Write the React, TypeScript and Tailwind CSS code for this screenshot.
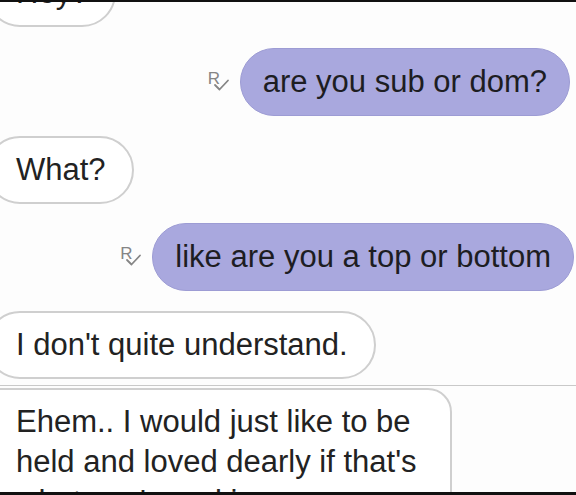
import React from 'react'

const font = { fontFamily: '"Liberation Sans", Arial, sans-serif' }

function ReadMark() {
  return (
    <div className="relative h-[24px] w-[22px] shrink-0 text-[#858585]">
      <span className="absolute left-0 top-0 text-[17px] leading-none">R</span>
      <svg className="absolute left-[5px] top-[8px]" width="17" height="14" viewBox="0 0 17 14" fill="none">
        <path d="M2 7 L6.5 11.5 L15 2.5" stroke="#858585" strokeWidth="1.8" strokeLinecap="round" strokeLinejoin="round" />
      </svg>
    </div>
  )
}

function Sent({ text, mr }: { text: string; mr: string }) {
  return (
    <div className={`flex items-center justify-end gap-[10px] ${mr}`}>
      <ReadMark />
      <div className="flex h-[68px] items-center rounded-full border border-[#9d9cd4] bg-[#a9a8de] px-[22px] text-[31px] text-[#1d1d22]">
        {text}
      </div>
    </div>
  )
}

function Received({ text, className = '' }: { text: string; className?: string }) {
  return (
    <div className={`flex ${className}`}>
      <div className="-ml-[14px] flex h-[68px] items-center rounded-full border-2 border-[#cfcfcf] bg-white pl-7 pr-[26px] text-[31px] text-[#222]">
        {text}
      </div>
    </div>
  )
}

export default function App() {
  return (
    <div className="flex h-[495px] w-[576px] flex-col overflow-hidden bg-[#fdfdfd]" style={font}>
      <div className="h-[2px] shrink-0 bg-[#111]" />
      <div className="flex min-h-0 flex-1 flex-col overflow-hidden">
        <Received text="Hey?" className="-mt-[43px]" />
        <div className="mt-[21px]">
          <Sent text="are you sub or dom?" mr="mr-[6px]" />
        </div>
        <Received text="What?" className="mt-5" />
        <div className="mt-[19px]">
          <Sent text="like are you a top or bottom" mr="mr-[2px]" />
        </div>
        <Received text="I don't quite understand." className="mt-5" />
        <div className="mt-[6px] h-px w-full shrink-0 bg-[#c9c9c9]" />
        <div className="mt-[2px] flex">
          <div className="-ml-[14px] w-[466px] rounded-tr-[24px] border-2 border-[#cfcfcf] bg-white pb-4 pl-7 pr-4 pt-[12px] text-[31px] leading-[40px] text-[#222]">
            Ehem.. I would just like to be held and loved dearly if that's what you're asking
          </div>
        </div>
      </div>
      <div className="h-[3px] shrink-0 bg-[#111]" />
    </div>
  )
}
